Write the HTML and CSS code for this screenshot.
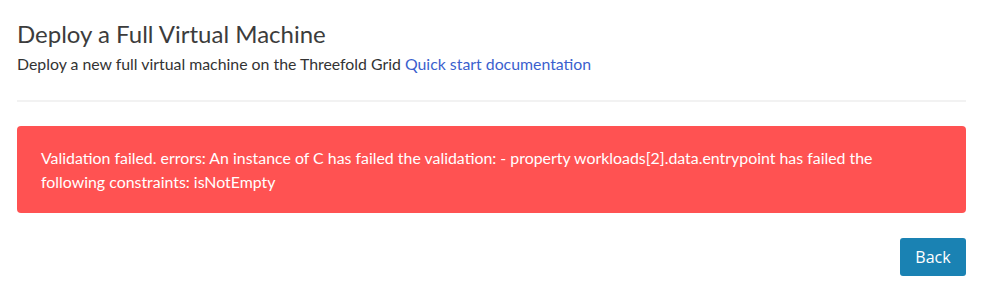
FILE: index.html
```html
<!DOCTYPE html>
<html>
<head>
<meta charset="utf-8">
<link rel="stylesheet" href="styles.css">
</head>
<body>
<div class="page">
  <header class="head">
    <h1 class="title">Deploy a Full Virtual Machine</h1>
    <p class="subtitle">Deploy a new full virtual machine on the Threefold Grid <a class="link" href="#">Quick start documentation</a></p>
  </header>
  <hr class="divider">
  <div class="alert">Validation failed. errors: An instance of C has failed the validation: - property workloads[2].data.entrypoint has failed the following constraints: isNotEmpty</div>
  <div class="actions">
    <button class="btn">Back</button>
  </div>
</div>
</body>
</html>
```
FILE: styles.css
```css
html, body {
  margin: 0;
  padding: 0;
  background: #fff;
}
body {
  font-family: Lato, "Open Sans", sans-serif;
  color: #333;
}
.page {
  padding: 18px 19px 0 17px;
}
.head {
  padding-bottom: 24px;
}
.title {
  margin: 0;
  font-size: 24px;
  font-weight: 400;
  line-height: 32px;
  color: #3c3c3c;
}
.subtitle {
  margin: 2px 0 0;
  font-size: 15.85px;
  line-height: 24px;
  color: #333;
}
.link {
  color: #3b5fce;
  text-decoration: none;
}
.divider {
  margin: 0;
  border: 0;
  border-top: 2px solid #f2f2f2;
}
.alert {
  margin-top: 24px;
  background: #ff5252;
  color: #fff;
  border-radius: 4px;
  padding: 20px 60px 19px 24px;
  font-size: 15.9px;
  line-height: 24px;
}
.actions {
  display: flex;
  justify-content: flex-end;
  margin-top: 25px;
}
.btn {
  background: #1a82b3;
  color: #fff;
  border: 0;
  border-radius: 3px;
  font-family: "Open Sans", sans-serif;
  font-size: 16px;
  height: 38px;
  width: 66px;
  padding: 0;
}
```
